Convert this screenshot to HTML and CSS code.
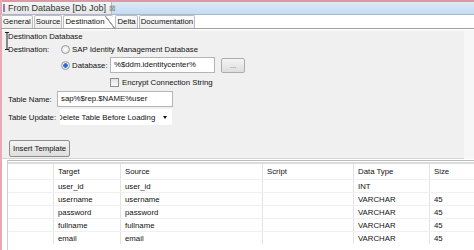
FILE: index.html
```html
<!DOCTYPE html>
<html lang="en">
<head>
    <meta charset="UTF-8">
    <title>From Database [Db Job]</title>
    <link rel="stylesheet" href="styles.css">
</head>
<body>
    <div class="window">
        <!-- Editor title -->
        <div class="titlebar">
            <div class="title-tab">
                <span class="title-icon"></span>
                <span>From Database [Db Job]</span>
                <span class="close">&#8864;</span>
            </div>
        </div>

        <!-- Page tabs -->
        <div class="tabs">
            <div class="tab">General</div>
            <div class="tab">Source</div>
            <div class="tab active">Destination</div>
            <div class="tab">Delta</div>
            <div class="tab">Documentation</div>
        </div>

        <div class="content">
            <div class="panel">
                <div class="legend">Destination Database</div>
                <div class="row row-dest">
                    <span class="label w-dest">Destination:</span>
                    <span class="radio"></span>
                    <span>SAP Identity Management Database</span>
                </div>
                <div class="row row-db">
                    <span class="radio checked"></span>
                    <span class="label w-db">Database:</span>
                    <span class="input w-dbinput">%$ddm.identitycenter%</span>
                    <span class="button small">...</span>
                </div>
                <div class="row row-check">
                    <span class="checkbox"></span>
                    <span>Encrypt Connection String</span>
                </div>
                <div class="row">
                    <span class="label w-name">Table Name:</span>
                    <span class="input w-nameinput">sap%$rep.$NAME%user</span>
                </div>
                <div class="row">
                    <span class="label w-update">Table Update:</span>
                    <span class="select"><span class="select-text">Delete Table Before Loading</span><span class="arrow"></span></span>
                </div>
                <div class="insert">
                    <span class="button">Insert Template</span>
                </div>
            </div>
        </div>

        <!-- Mapping table -->
        <div class="table">
            <div class="thead">
                <div class="cell c0"></div>
                <div class="cell c1">Target</div>
                <div class="cell c2">Source</div>
                <div class="cell c3">Script</div>
                <div class="cell c4">Data Type</div>
                <div class="cell c5">Size</div>
            </div>
            <div class="trow">
                <div class="cell c0"></div>
                <div class="cell c1">user_id</div>
                <div class="cell c2">user_id</div>
                <div class="cell c3"></div>
                <div class="cell c4">INT</div>
                <div class="cell c5"></div>
            </div>
            <div class="trow">
                <div class="cell c0"></div>
                <div class="cell c1">username</div>
                <div class="cell c2">username</div>
                <div class="cell c3"></div>
                <div class="cell c4">VARCHAR</div>
                <div class="cell c5">45</div>
            </div>
            <div class="trow">
                <div class="cell c0"></div>
                <div class="cell c1">password</div>
                <div class="cell c2">password</div>
                <div class="cell c3"></div>
                <div class="cell c4">VARCHAR</div>
                <div class="cell c5">45</div>
            </div>
            <div class="trow">
                <div class="cell c0"></div>
                <div class="cell c1">fullname</div>
                <div class="cell c2">fullname</div>
                <div class="cell c3"></div>
                <div class="cell c4">VARCHAR</div>
                <div class="cell c5">45</div>
            </div>
            <div class="trow">
                <div class="cell c0"></div>
                <div class="cell c1">email</div>
                <div class="cell c2">email</div>
                <div class="cell c3"></div>
                <div class="cell c4">VARCHAR</div>
                <div class="cell c5">45</div>
            </div>
        </div>

        <!-- mouse cursor -->
        <svg class="cursor" width="5" height="18" viewBox="0 0 5 18">
            <path d="M0 0.5h4M2 0.5v17M0 17.5h4" stroke="#222" stroke-width="1" fill="none"/>
        </svg>
    </div>
</body>
</html>
```

FILE: styles.css
```css
body {
    margin: 0;
    width: 474px;
    height: 250px;
    overflow: hidden;
    font-family: "Liberation Sans", Arial, sans-serif;
    font-size: 7.8px;
    color: #111;
    background: #fff;
    white-space: nowrap;
}

.window {
    position: relative;
    height: 250px;
    border-left: 2px solid #e8a8b4;
    box-sizing: border-box;
    display: flex;
    flex-direction: column;
}

.titlebar {
    flex: none;
    height: 12px;
    border-top: 2px solid #dc98a6;
    background: linear-gradient(#dde9f7, #c6dbf3);
    border-bottom: 1px solid #a9b8c9;
    display: flex;
}

.title-tab {
    width: 108px;
    background: linear-gradient(#f6f6f6, #e6e6e6);
    border-right: 1px solid #b9b9b9;
    display: flex;
    align-items: center;
    gap: 3px;
    padding-left: 1px;
    color: #333;
    font-size: 9px;
}

.title-icon {
    width: 6px;
    height: 6px;
    border: 1px solid #7d8fa8;
    background: #fff;
}

.close {
    color: #888;
    font-size: 8px;
}

.tabs {
    flex: none;
    height: 13px;
    display: flex;
    align-items: flex-end;
    border-bottom: 1px solid #a0a0a0;
    background: #fff;
    margin-left: -1px;
}

.tab {
    position: relative;
    height: 12px;
    line-height: 12px;
    padding: 0 1px;
    border: 1px solid #bdbdbd;
    border-bottom: none;
    border-radius: 2px 2px 0 0;
    background: linear-gradient(#fdfdfd, #eeeeee);
    margin-right: 1px;
}

.tab.active {
    background: #fff;
    padding-right: 9px;
    border-right: none;
    margin-right: 2px;
}

/* slanted right edge of the selected tab */
.tab.active::after {
    content: "";
    position: absolute;
    right: -2px;
    top: 0;
    width: 10px;
    height: 13px;
    background: linear-gradient(to top right, transparent 46%, #9c9c9c 48%, #9c9c9c 54%, transparent 56%);
}

.content {
    flex: none;
    background: #f7f7f7;
    padding: 1px 10px 0 0;
    border-top: 1px solid #fff;
}

.panel {
    background: #f0f0f0;
    border-bottom: 1px solid #d4d4d4;
    height: 127px;
    padding: 0 0 0 6px;
}

.legend {
    height: 11px;
    line-height: 11px;
}

.row {
    display: flex;
    align-items: center;
    height: 18px;
}

.row-dest { height: 14px; }
.row-db { padding-left: 53px; }
.row-check { padding-left: 102px; height: 16px; }

.label {
    display: inline-block;
    flex: none;
}

.w-dest { width: 53px; }
.w-db { width: 38px; }
.w-name { width: 49px; }
.w-update { width: 52px; }

.radio {
    flex: none;
    width: 7px;
    height: 7px;
    border-radius: 50%;
    border: 1px solid #9a9a9a;
    background: radial-gradient(#fff, #dcdcdc);
    margin-right: 2px;
}

.radio.checked {
    background: radial-gradient(circle, #2c6fcf 0 2px, #e9eef6 2.5px);
}

.checkbox {
    flex: none;
    width: 7px;
    height: 7px;
    border: 1px solid #8f8f8f;
    background: linear-gradient(#e2e2e2, #fafafa);
    margin-right: 3px;
}

.input {
    flex: none;
    height: 16px;
    line-height: 14px;
    border: 1px solid #b4b4b4;
    background: #fff;
    padding-left: 3px;
    box-sizing: border-box;
}

.w-dbinput { width: 105px; }
.w-nameinput { width: 116px; }

.button {
    display: inline-flex;
    align-items: center;
    justify-content: center;
    border: 1px solid #8e8e8e;
    border-radius: 2px;
    background: linear-gradient(#f4f4f4, #dedede);
    height: 17px;
    box-sizing: border-box;
    padding: 0 3px;
}

.button.small {
    width: 24px;
    height: 15px;
    margin-left: 6px;
    color: #666;
    border-color: #acacac;
}

.select {
    flex: none;
    width: 112px;
    height: 16px;
    background: #fff;
    display: flex;
    align-items: center;
    overflow: hidden;
    box-sizing: border-box;
}

.select-text {
    flex: none;
    width: 99px;
    text-indent: -3px;
    overflow: hidden;
}

.arrow {
    width: 0;
    height: 0;
    border-left: 2.5px solid transparent;
    border-right: 2.5px solid transparent;
    border-top: 3px solid #111;
    margin-left: 4px;
}

.insert {
    padding-top: 14px;
    margin-left: 1px;
}

.table {
    flex: 1;
    margin: 1px 0 0 5px;
    border-top: 1px solid #bcbcbc;
    border-left: 1px solid #cfcfcf;
    background: #fff;
}

.thead, .trow {
    display: flex;
    height: 13px;
    line-height: 13px;
}

.thead {
    height: 15px;
    line-height: 15px;
    border-top: 2px solid #dcdcdc;
    margin-top: 1px;
}

.trow {
    border-top: 1px solid #f0f0f0;
    height: 12px;
}

.cell {
    flex: none;
    box-sizing: border-box;
    border-right: 1px solid #e3e3e3;
    padding-left: 4px;
}

.c0 { width: 46px; }
.c1 { width: 67px; }
.c2 { width: 142px; }
.c3 { width: 91px; }
.c4 { width: 76px; }
.c5 { width: 50px; }

.cursor {
    position: absolute;
    left: 3px;
    top: 32px;
}
```
